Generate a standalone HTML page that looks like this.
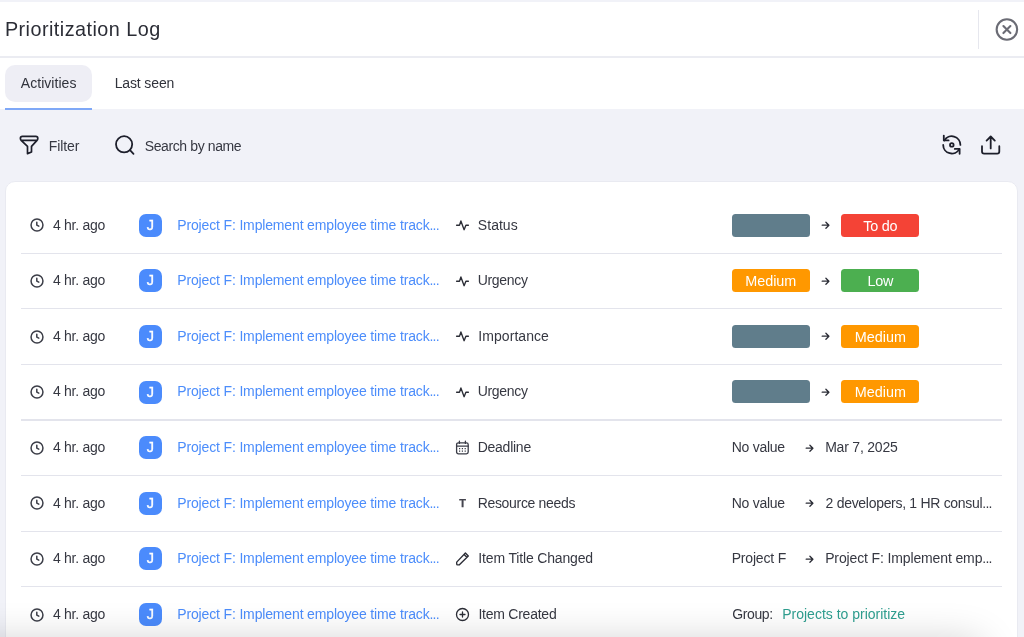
<!DOCTYPE html>
<html lang="en">
<head>
<meta charset="utf-8">
<title>Prioritization Log</title>
<style>
html,body{margin:0;padding:0;}
body{width:1024px;height:637px;overflow:hidden;position:relative;background:#f1f2f8;font-family:"Liberation Sans",sans-serif;color:#2e3038;}
.abs{position:absolute;}
#wrap{position:absolute;left:0;top:0;width:1024px;height:637px;overflow:hidden;will-change:transform;}
#hdr{position:absolute;left:0;top:2px;width:1024px;height:54.2px;background:#fff;}
#hline{position:absolute;left:0;top:56.2px;width:1024px;height:1.6px;background:#ebecf2;}
#tabs{position:absolute;left:0;top:57.8px;width:1024px;height:51px;background:#fff;}
.ttl{position:absolute;font-size:19.8px;line-height:24px;color:#2b2d36;white-space:nowrap;}
#vsep{position:absolute;left:978px;top:10px;width:1px;height:39px;background:#e6e7ee;}
#pill{position:absolute;left:5px;top:65px;width:86.5px;height:36.5px;border-radius:10px;background:#eeeef5;}
#uline{position:absolute;left:5px;top:107.9px;width:86.5px;height:1.9px;background:#7fa8f7;}
.tab{position:absolute;font-size:14px;line-height:20px;white-space:nowrap;color:#31333c;}
.tb{position:absolute;font-size:14px;line-height:20px;white-space:nowrap;color:#363842;}
#card{position:absolute;left:5px;top:181px;width:1011px;height:470px;background:#fff;border:1px solid #e9eaf1;border-radius:10px;box-sizing:content-box;}
.t{position:absolute;font-size:14px;line-height:20px;white-space:nowrap;color:#363842;}
.link{color:#4c8dfb;}
.el{letter-spacing:-0.8px !important;}
.teal{color:#2e9e8f;}
.av{position:absolute;width:22.8px;height:23.1px;border-radius:7px;background:#4b8bfc;color:#fff;font-size:14.5px;line-height:23.4px;text-align:center;-webkit-text-stroke:0.35px #fff;}
.chip{position:absolute;width:78px;height:23px;border-radius:3.5px;color:#fff;font-size:14.4px;line-height:24px;text-align:center;white-space:nowrap;}
.fi,.ar{position:absolute;overflow:visible;}
.ti{position:absolute;font-size:11px;font-weight:bold;line-height:14px;color:#44454f;width:9px;text-align:center;-webkit-text-stroke:0.25px #44454f;}
.dv{position:absolute;left:21px;width:980.5px;height:1.2px;background:#e3e4ec;}
#fade{position:absolute;left:-80px;top:642px;width:1062px;height:80px;border-radius:10px;box-shadow:0 0 40px rgba(0,0,0,0.2);}
</style>
</head>
<body>
<div id="wrap">
<div id="hdr"></div>
<div id="hline"></div>
<div id="tabs"></div>
<div id="vsep"></div>
<svg class="abs" style="left:995px;top:18px" width="24" height="24" viewBox="0 0 24 24"><circle cx="11.9" cy="11.55" r="10.25" fill="none" stroke="#6b6c75" stroke-width="2.1"/><path d="M8.4 8.05 L15.4 15.05 M15.4 8.05 L8.4 15.05" stroke="#6b6c75" stroke-width="2.1" fill="none" stroke-linecap="round"/></svg>
<div id="pill"></div>
<div id="uline"></div>

<svg class="abs" style="left:12px;top:128px" width="36" height="34" viewBox="0 0 36 34"><path d="M10.4 8.4 H23.8 Q25.8 8.4 25.8 10.4 Q25.8 11.6 24.8 12.6 L19.5 18.4 V24 L15.5 25.6 V18.4 L9.4 12.6 Q8.4 11.6 8.4 10.4 Q8.4 8.4 10.4 8.4 Z M9.4 12.4 H24.8" fill="none" stroke="#1d1f2b" stroke-width="1.7" stroke-linejoin="round" stroke-linecap="round"/></svg>
<svg class="abs" style="left:114px;top:135px" width="22" height="22" viewBox="0 0 22 22"><circle cx="10.1" cy="9.3" r="8.1" fill="none" stroke="#1d1f2b" stroke-width="1.8"/><path d="M16 15.2 L19.5 18.8" stroke="#1d1f2b" stroke-width="1.8" stroke-linecap="round"/></svg>

<svg class="abs" style="left:936px;top:128px" width="36" height="34" viewBox="0 0 36 34"><g fill="none" stroke="#1d1f2b" stroke-width="1.8" stroke-linecap="round" stroke-linejoin="round"><path d="M8.4 12.5 A8.6 8.6 0 0 1 24.4 16.9"/><path d="M7.2 16.9 A8.6 8.6 0 0 0 23.3 21.1"/><path d="M7.8 7.6 V12.4 H12.6"/><path d="M18.8 20.9 H23.6 V25.8"/><circle cx="15.8" cy="16.9" r="1.8"/></g></svg>
<svg class="abs" style="left:972px;top:128px" width="36" height="34" viewBox="36 0 36 34"><g fill="none" stroke="#1d1f2b" stroke-width="1.8" stroke-linecap="round" stroke-linejoin="round"><path d="M46 18.2 V23.6 Q46 25.7 48.1 25.7 H61.2 Q63.3 25.7 63.3 23.6 V18.2"/><path d="M54.7 20.4 V8.6 M50.6 12.6 L54.7 8.5 L58.8 12.6"/></g></svg>

<span class="ttl" style="left:4.90px;top:17px;letter-spacing:0.470px">Prioritization Log</span>
<span class="tab" style="left:20.79px;top:73px;letter-spacing:0.045px">Activities</span>
<span class="tab" style="left:114.63px;top:73px;letter-spacing:-0.126px">Last seen</span>
<span class="tb" style="left:48.72px;top:136px;letter-spacing:-0.093px">Filter</span>
<span class="tb" style="left:144.72px;top:136px;letter-spacing:-0.391px">Search by name</span>
<div id="card"></div>
<svg class="fi" style="left:30px;top:218.30px" width="14" height="14" viewBox="0 0 14 14"><circle cx="7" cy="7" r="5.95" fill="none" stroke="#3c3e48" stroke-width="1.5"/><path d="M6.8 4.2 V7.1 L8.8 8.2" fill="none" stroke="#3c3e48" stroke-width="1.5" stroke-linecap="round" stroke-linejoin="round"/></svg>
<span class="t time" style="left:52.90px;top:215px;letter-spacing:-0.273px">4 hr. ago</span>
<span class="av" style="left:139px;top:213.70px">J</span>
<span class="t link" style="left:177.25px;top:215px;letter-spacing:-0.151px">Project F: Implement employee time track<span class="el">...</span></span>
<svg class="fi" style="left:456px;top:218.00px" width="14" height="14" viewBox="0 0 14 14"><path d="M0.6 7.2 H3.5 L4.9 3.0 L8.1 11.7 L9.9 7.2 H12.4" fill="none" stroke="#2b2d36" stroke-width="1.35" stroke-linecap="round" stroke-linejoin="round"/></svg>
<span class="t lab" style="left:477.86px;top:215px;letter-spacing:0.020px">Status</span>
<span class="chip" style="left:731.8px;top:213.60px;background:#607d8b"></span>
<svg class="ar" style="left:821.1px;top:220.20px" width="10" height="10" viewBox="0 0 10 10"><path d="M1.2 5.2 H7.6 M4.9 2.2 L7.9 5.2 L4.9 8.2" fill="none" stroke="#2b2d36" stroke-width="1.3" stroke-linecap="round" stroke-linejoin="round"/></svg>
<span class="chip" style="left:841.4px;top:213.60px;background:#f44336;letter-spacing:-0.192px;text-indent:-0.192px">To do</span>
<div class="dv" style="top:252.60px"></div>
<svg class="fi" style="left:30px;top:273.90px" width="14" height="14" viewBox="0 0 14 14"><circle cx="7" cy="7" r="5.95" fill="none" stroke="#3c3e48" stroke-width="1.5"/><path d="M6.8 4.2 V7.1 L8.8 8.2" fill="none" stroke="#3c3e48" stroke-width="1.5" stroke-linecap="round" stroke-linejoin="round"/></svg>
<span class="t time" style="left:52.90px;top:270px;letter-spacing:-0.273px">4 hr. ago</span>
<span class="av" style="left:139px;top:269.30px">J</span>
<span class="t link" style="left:177.25px;top:270px;letter-spacing:-0.151px">Project F: Implement employee time track<span class="el">...</span></span>
<svg class="fi" style="left:456px;top:273.60px" width="14" height="14" viewBox="0 0 14 14"><path d="M0.6 7.2 H3.5 L4.9 3.0 L8.1 11.7 L9.9 7.2 H12.4" fill="none" stroke="#2b2d36" stroke-width="1.35" stroke-linecap="round" stroke-linejoin="round"/></svg>
<span class="t lab" style="left:477.74px;top:270px;letter-spacing:-0.318px">Urgency</span>
<span class="chip" style="left:731.8px;top:269.20px;background:#ff9800;letter-spacing:-0.021px;text-indent:-0.021px">Medium</span>
<svg class="ar" style="left:821.1px;top:275.80px" width="10" height="10" viewBox="0 0 10 10"><path d="M1.2 5.2 H7.6 M4.9 2.2 L7.9 5.2 L4.9 8.2" fill="none" stroke="#2b2d36" stroke-width="1.3" stroke-linecap="round" stroke-linejoin="round"/></svg>
<span class="chip" style="left:841.4px;top:269.20px;background:#4caf50;letter-spacing:-0.266px;text-indent:-0.266px">Low</span>
<div class="dv" style="top:308.20px"></div>
<svg class="fi" style="left:30px;top:329.50px" width="14" height="14" viewBox="0 0 14 14"><circle cx="7" cy="7" r="5.95" fill="none" stroke="#3c3e48" stroke-width="1.5"/><path d="M6.8 4.2 V7.1 L8.8 8.2" fill="none" stroke="#3c3e48" stroke-width="1.5" stroke-linecap="round" stroke-linejoin="round"/></svg>
<span class="t time" style="left:52.90px;top:326px;letter-spacing:-0.273px">4 hr. ago</span>
<span class="av" style="left:139px;top:324.90px">J</span>
<span class="t link" style="left:177.25px;top:326px;letter-spacing:-0.151px">Project F: Implement employee time track<span class="el">...</span></span>
<svg class="fi" style="left:456px;top:329.20px" width="14" height="14" viewBox="0 0 14 14"><path d="M0.6 7.2 H3.5 L4.9 3.0 L8.1 11.7 L9.9 7.2 H12.4" fill="none" stroke="#2b2d36" stroke-width="1.35" stroke-linecap="round" stroke-linejoin="round"/></svg>
<span class="t lab" style="left:478.32px;top:326px;letter-spacing:0.059px">Importance</span>
<span class="chip" style="left:731.8px;top:324.80px;background:#607d8b"></span>
<svg class="ar" style="left:821.1px;top:331.40px" width="10" height="10" viewBox="0 0 10 10"><path d="M1.2 5.2 H7.6 M4.9 2.2 L7.9 5.2 L4.9 8.2" fill="none" stroke="#2b2d36" stroke-width="1.3" stroke-linecap="round" stroke-linejoin="round"/></svg>
<span class="chip" style="left:841.4px;top:324.80px;background:#ff9800;letter-spacing:-0.021px;text-indent:-0.021px">Medium</span>
<div class="dv" style="top:363.80px"></div>
<svg class="fi" style="left:30px;top:385.10px" width="14" height="14" viewBox="0 0 14 14"><circle cx="7" cy="7" r="5.95" fill="none" stroke="#3c3e48" stroke-width="1.5"/><path d="M6.8 4.2 V7.1 L8.8 8.2" fill="none" stroke="#3c3e48" stroke-width="1.5" stroke-linecap="round" stroke-linejoin="round"/></svg>
<span class="t time" style="left:52.90px;top:381px;letter-spacing:-0.273px">4 hr. ago</span>
<span class="av" style="left:139px;top:380.50px">J</span>
<span class="t link" style="left:177.25px;top:381px;letter-spacing:-0.151px">Project F: Implement employee time track<span class="el">...</span></span>
<svg class="fi" style="left:456px;top:384.80px" width="14" height="14" viewBox="0 0 14 14"><path d="M0.6 7.2 H3.5 L4.9 3.0 L8.1 11.7 L9.9 7.2 H12.4" fill="none" stroke="#2b2d36" stroke-width="1.35" stroke-linecap="round" stroke-linejoin="round"/></svg>
<span class="t lab" style="left:477.74px;top:381px;letter-spacing:-0.318px">Urgency</span>
<span class="chip" style="left:731.8px;top:380.40px;background:#607d8b"></span>
<svg class="ar" style="left:821.1px;top:387.00px" width="10" height="10" viewBox="0 0 10 10"><path d="M1.2 5.2 H7.6 M4.9 2.2 L7.9 5.2 L4.9 8.2" fill="none" stroke="#2b2d36" stroke-width="1.3" stroke-linecap="round" stroke-linejoin="round"/></svg>
<span class="chip" style="left:841.4px;top:380.40px;background:#ff9800;letter-spacing:-0.021px;text-indent:-0.021px">Medium</span>
<div class="dv" style="top:419.40px"></div>
<svg class="fi" style="left:30px;top:440.70px" width="14" height="14" viewBox="0 0 14 14"><circle cx="7" cy="7" r="5.95" fill="none" stroke="#3c3e48" stroke-width="1.5"/><path d="M6.8 4.2 V7.1 L8.8 8.2" fill="none" stroke="#3c3e48" stroke-width="1.5" stroke-linecap="round" stroke-linejoin="round"/></svg>
<span class="t time" style="left:52.90px;top:437px;letter-spacing:-0.273px">4 hr. ago</span>
<span class="av" style="left:139px;top:436.10px">J</span>
<span class="t link" style="left:177.25px;top:437px;letter-spacing:-0.151px">Project F: Implement employee time track<span class="el">...</span></span>
<svg class="fi" style="left:455px;top:440.30px" width="15" height="15" viewBox="0 0 15 15"><rect x="1.6" y="2.8" width="11.6" height="11" rx="1.8" fill="none" stroke="#3a3c47" stroke-width="1.3"/><path d="M1.6 6.2 H13.2 M4.4 1.2 V3.4 M10.4 1.2 V3.4" stroke="#3a3c47" stroke-width="1.3" fill="none" stroke-linecap="round"/><path d="M4 8.6h1.2M6.8 8.6h1.2M9.6 8.6h1.2M4 11.2h1.2M6.8 11.2h1.2M9.6 11.2h1.2" stroke="#3a3c47" stroke-width="1.2" fill="none"/></svg>
<span class="t lab" style="left:477.63px;top:437px;letter-spacing:-0.241px">Deadline</span>
<span class="t val" style="left:731.63px;top:437px;letter-spacing:-0.247px">No value</span>
<svg class="ar" style="left:805.3px;top:442.60px" width="10" height="10" viewBox="0 0 10 10"><path d="M1.2 5.2 H7.6 M4.9 2.2 L7.9 5.2 L4.9 8.2" fill="none" stroke="#2b2d36" stroke-width="1.3" stroke-linecap="round" stroke-linejoin="round"/></svg>
<span class="t val" style="left:825.15px;top:437px;letter-spacing:-0.206px">Mar 7, 2025</span>
<div class="dv" style="top:475.00px"></div>
<svg class="fi" style="left:30px;top:496.30px" width="14" height="14" viewBox="0 0 14 14"><circle cx="7" cy="7" r="5.95" fill="none" stroke="#3c3e48" stroke-width="1.5"/><path d="M6.8 4.2 V7.1 L8.8 8.2" fill="none" stroke="#3c3e48" stroke-width="1.5" stroke-linecap="round" stroke-linejoin="round"/></svg>
<span class="t time" style="left:52.90px;top:493px;letter-spacing:-0.273px">4 hr. ago</span>
<span class="av" style="left:139px;top:491.70px">J</span>
<span class="t link" style="left:177.25px;top:493px;letter-spacing:-0.151px">Project F: Implement employee time track<span class="el">...</span></span>
<span class="ti" style="left:458px;top:496.40px">T</span>
<span class="t lab" style="left:477.63px;top:493px;letter-spacing:-0.312px">Resource needs</span>
<span class="t val" style="left:731.63px;top:493px;letter-spacing:-0.247px">No value</span>
<svg class="ar" style="left:805.3px;top:498.20px" width="10" height="10" viewBox="0 0 10 10"><path d="M1.2 5.2 H7.6 M4.9 2.2 L7.9 5.2 L4.9 8.2" fill="none" stroke="#2b2d36" stroke-width="1.3" stroke-linecap="round" stroke-linejoin="round"/></svg>
<span class="t val" style="left:825.61px;top:493px;letter-spacing:-0.300px">2 developers, 1 HR consul<span class="el">...</span></span>
<div class="dv" style="top:530.60px"></div>
<svg class="fi" style="left:30px;top:551.90px" width="14" height="14" viewBox="0 0 14 14"><circle cx="7" cy="7" r="5.95" fill="none" stroke="#3c3e48" stroke-width="1.5"/><path d="M6.8 4.2 V7.1 L8.8 8.2" fill="none" stroke="#3c3e48" stroke-width="1.5" stroke-linecap="round" stroke-linejoin="round"/></svg>
<span class="t time" style="left:52.90px;top:548px;letter-spacing:-0.273px">4 hr. ago</span>
<span class="av" style="left:139px;top:547.30px">J</span>
<span class="t link" style="left:177.25px;top:548px;letter-spacing:-0.151px">Project F: Implement employee time track<span class="el">...</span></span>
<svg class="fi" style="left:455px;top:550.60px" width="15" height="15" viewBox="0 0 15 15"><path d="M10.4 2.0 L13.3 4.9 L4.4 13.8 H2.6 Q1.7 13.8 1.7 12.9 V11.1 Z M9.0 3.4 L11.9 6.3" fill="none" stroke="#2b2d36" stroke-width="1.35" stroke-linejoin="round" stroke-linecap="round"/></svg>
<span class="t lab" style="left:478.32px;top:548px;letter-spacing:-0.159px">Item Title Changed</span>
<span class="t val" style="left:731.63px;top:548px;letter-spacing:-0.171px">Project F</span>
<svg class="ar" style="left:805.3px;top:553.80px" width="10" height="10" viewBox="0 0 10 10"><path d="M1.2 5.2 H7.6 M4.9 2.2 L7.9 5.2 L4.9 8.2" fill="none" stroke="#2b2d36" stroke-width="1.3" stroke-linecap="round" stroke-linejoin="round"/></svg>
<span class="t val" style="left:825.15px;top:548px;letter-spacing:-0.130px">Project F: Implement emp<span class="el">...</span></span>
<div class="dv" style="top:586.20px"></div>
<svg class="fi" style="left:30px;top:607.50px" width="14" height="14" viewBox="0 0 14 14"><circle cx="7" cy="7" r="5.95" fill="none" stroke="#3c3e48" stroke-width="1.5"/><path d="M6.8 4.2 V7.1 L8.8 8.2" fill="none" stroke="#3c3e48" stroke-width="1.5" stroke-linecap="round" stroke-linejoin="round"/></svg>
<span class="t time" style="left:52.90px;top:604px;letter-spacing:-0.273px">4 hr. ago</span>
<span class="av" style="left:139px;top:602.90px">J</span>
<span class="t link" style="left:177.25px;top:604px;letter-spacing:-0.151px">Project F: Implement employee time track<span class="el">...</span></span>
<svg class="fi" style="left:455px;top:606.90px" width="15" height="15" viewBox="0 0 15 15"><circle cx="7.5" cy="7.5" r="6" fill="none" stroke="#2b2d36" stroke-width="1.3"/><path d="M7.5 5.0 V10.0 M5.0 7.5 H10.0" stroke="#2b2d36" stroke-width="1.3" fill="none" stroke-linecap="round"/></svg>
<span class="t lab" style="left:478.39px;top:604px;letter-spacing:-0.236px">Item Created</span>
<span class="t val" style="left:732.15px;top:604px;letter-spacing:-0.353px">Group:</span>
<span class="t teal" style="left:782.25px;top:604px;letter-spacing:-0.007px">Projects to prioritize</span>
<div id="fade"></div>
</div>
</body>
</html>
